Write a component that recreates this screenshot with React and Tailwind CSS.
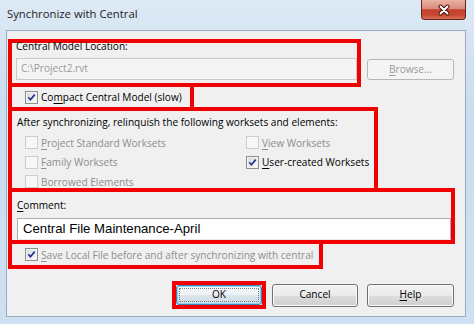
import React from 'react';

function Check({ checked, disabled }) {
  return (
    <span
      className={`flex items-center justify-center shrink-0 w-[13px] h-[13px] border ${
        disabled
          ? 'border-[#cdcdcd] bg-[#f7f7f7]'
          : 'border-[#8e8f8f] bg-[linear-gradient(135deg,#d6d9de,#fbfbfb)] shadow-[inset_0_0_0_1px_#f3f3f3]'
      }`}
    >
      {checked && (
        <svg viewBox="0 0 11 11" className="w-[11px] h-[11px]">
          <path d="M2.3 5.3l2.1 2.4 4.3-5.1" fill="none" stroke="#20318f" strokeWidth="1.7" />
        </svg>
      )}
    </span>
  );
}

function Option({ checked, disabled, dim, children }) {
  return (
    <div className="flex items-center gap-[3px] h-full">
      <Check checked={checked} disabled={disabled} />
      <span className={`leading-[14px] whitespace-nowrap ${disabled || dim ? 'text-[#8e8e8e]' : 'text-black'}`}>
        {children}
      </span>
    </div>
  );
}

function Key({ children }) {
  return <span className="underline decoration-1 underline-offset-[1.5px]">{children}</span>;
}

function Button({ width, children }) {
  return (
    <div
      className={`${width} h-[23px] flex items-center justify-center rounded-[3px] border border-[#707070] bg-[linear-gradient(#f2f2f2,#ebebeb_50%,#dddddd_50%,#cfcfcf)] shadow-[inset_0_0_0_1px_#fbfbfb] text-black`}
    >
      {children}
    </div>
  );
}

export default function App() {
  return (
    <div className="w-[474px] h-[324px] flex flex-col bg-[linear-gradient(180deg,#dde9f5,#cadcef_35%,#cfe0f2)] text-[10.1px] font-medium font-['Open_Sans',sans-serif]">
      {/* title bar */}
      <div className="h-[30px] shrink-0 flex justify-between">
        <div className="pl-[7px] pt-[7px] text-[11.3px] leading-[14px] text-[#1b1b1b]">Synchronize with Central</div>
        <div className="mr-[8px] w-[45px] h-[20px] flex items-center justify-center rounded-b-[4px] border border-t-0 border-[#6b2318] bg-[linear-gradient(180deg,#eab2a4,#d98b7b_45%,#c4402c_52%,#c84a33_80%,#d6735a)]">
          <svg width="14" height="12" viewBox="0 0 14 12">
            <path d="M3.5 2.5l7 7M10.5 2.5l-7 7" stroke="#4a1209" strokeWidth="4" strokeLinecap="round" />
            <path d="M3.5 2.5l7 7M10.5 2.5l-7 7" stroke="#ffffff" strokeWidth="2" strokeLinecap="round" />
          </svg>
        </div>
      </div>

      {/* client area */}
      <div className="flex-1 ml-[6px] mr-[8px] mb-[7px] flex flex-col bg-[#f0f0f0] border border-[#9aabc0] pl-[1px] pt-[8px]">
        <div className="flex items-end">
          <div className="w-[353px] h-[48px] flex flex-col border-4 border-[#f00000]">
            <div className="-mt-[4px] pl-[4px] leading-[14px] text-black">Central Model Location:</div>
            <div className="mt-[5px] ml-[4px] h-[22px] flex items-center pl-[4px] border border-[#c9c9c9] bg-[#f4f4f4] text-[#9a9a9a]">
              C:\Project2.rvt
            </div>
          </div>
          <div className="ml-[6px] mb-[7px] w-[87px] h-[21px] flex items-center justify-center rounded-[3px] border border-[#b5b9bc] bg-[#f4f4f4] text-[#9a9a9a]">
            <span>
              <Key>B</Key>rowse...
            </span>
          </div>
        </div>

        <div className="-mt-[4px] w-[186px] h-[28px] pl-[13px] border-4 border-[#f00000]">
          <Option checked>
            Co<Key>m</Key>pact Central Model (slow)
          </Option>
        </div>

        <div className="-mt-[4px] w-[370px] h-[85px] pt-[4px] border-4 border-[#f00000]">
          <div className="pl-[5px] leading-[14px] text-black">
            After synchronizing, relinquish the following worksets and elements:
          </div>
          <div className="mt-[4px] pl-[13px] grid grid-cols-[221px_1fr] grid-rows-[19.5px_19.5px_19.5px]">
            <Option disabled>
              <Key>P</Key>roject Standard Worksets
            </Option>
            <Option disabled>
              <Key>V</Key>iew Worksets
            </Option>
            <Option disabled>
              <Key>F</Key>amily Worksets
            </Option>
            <Option checked>
              <Key>U</Key>ser-created Worksets
            </Option>
            <Option disabled>
              B<Key>o</Key>rrowed Elements
            </Option>
          </div>
        </div>

        <div className="-mt-[4px] w-[447px] h-[56px] pt-[6px] flex flex-col border-4 border-[#f00000]">
          <div className="pl-[5px] leading-[14px] text-black">
            <Key>C</Key>omment:
          </div>
          <div className="mt-[6px] ml-[5px] h-[22px] flex items-center pl-[5px] pb-[1px] bg-white border border-[#abadb3] border-b-[#e3e9ef] text-[13.2px] font-normal text-black font-['Liberation_Sans',Arial,sans-serif]">
            Central File Maintenance-April
          </div>
        </div>

        <div className="-mt-[4px] w-[315px] h-[29px] pl-[13px] border-4 border-[#f00000]">
          <Option checked dim>
            <Key>S</Key>ave Local File before and after synchronizing with central
          </Option>
        </div>

        <div className="mt-[12px] pr-[11px] flex items-center justify-end">
          <div className="w-[94px] h-[28px] border-4 border-[#f00000]">
            <div className="h-full p-[2px] rounded-[3px] border border-[#3c7fb1] bg-[linear-gradient(#f4f7fa,#edf1f5_50%,#dde5ec_50%,#d2dde6)] shadow-[inset_0_0_0_1px_#8fd3f0]">
              <div className="h-full flex items-center justify-center border border-dotted border-[#7a7a7a] text-black">OK</div>
            </div>
          </div>
          <div className="ml-[6px]">
            <Button width="w-[86px]">Cancel</Button>
          </div>
          <div className="ml-[9px]">
            <Button width="w-[87px]">
              <span>
                <Key>H</Key>elp
              </span>
            </Button>
          </div>
        </div>
      </div>
    </div>
  );
}
